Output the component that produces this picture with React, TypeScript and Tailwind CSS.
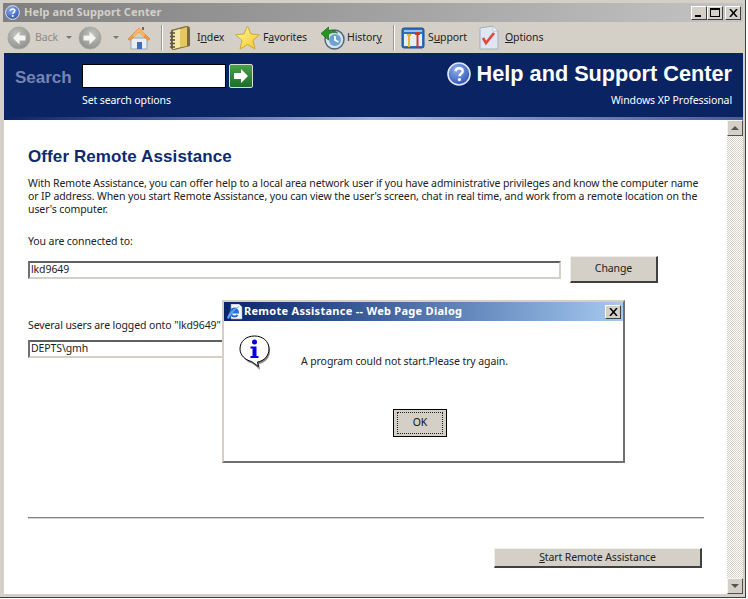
import type { ReactNode } from 'react';

const tahoma = 'font-["Noto_Sans",sans-serif]';
const arial = 'font-["Liberation_Sans",Arial,sans-serif]';
const small = 'text-[10.5px] tracking-[-0.1px]';

function HelpBall({ size, className = '' }: { size: number; className?: string }) {
  return (
    <svg width={size} height={size} viewBox="0 0 24 24" className={className}>
      <defs>
        <radialGradient id="ball" cx="40%" cy="30%" r="75%">
          <stop offset="0" stopColor="#8fb0ee" />
          <stop offset="1" stopColor="#2a52b0" />
        </radialGradient>
      </defs>
      <circle cx="12" cy="12" r="11" fill="url(#ball)" stroke="#dfe6f5" strokeWidth="1.6" />
      <path d="M8.4 9.2c.3-2 1.8-3 3.7-3 2.1 0 3.6 1.2 3.6 3 0 2.6-3.2 2.6-3.2 5" fill="none" stroke="#fff" strokeWidth="2.4" />
      <circle cx="12.4" cy="17.6" r="1.6" fill="#fff" />
    </svg>
  );
}

function NavCircle({ flip }: { flip?: boolean }) {
  return (
    <svg width="24" height="24" viewBox="0 0 24 24" className={flip ? '-scale-x-100' : ''}>
      <defs>
        <radialGradient id="nav" cx="40%" cy="35%" r="70%">
          <stop offset="0" stopColor="#c4c4c0" />
          <stop offset="1" stopColor="#8e8e8a" />
        </radialGradient>
      </defs>
      <circle cx="12" cy="12" r="11" fill="url(#nav)" stroke="#a9a9a4" />
      <path d="M12.5 5.5 6 12l6.5 6.5V14.500h6v-5h-6z" fill="#f4f4f2" />
    </svg>
  );
}

function Caret() {
  return <span className="block h-0 w-0 border-x-[3px] border-t-[3px] border-x-transparent border-t-[#77776f]" />;
}

function Home() {
  return (
    <svg width="24" height="26" viewBox="0 0 24 26">
      <path d="M4 13h16v11H4z" fill="#e8edf6" stroke="#9aa3b5" />
      <path d="M10 17h5v7h-5z" fill="#3d6cc0" />
      <path d="M1 14 12 3l11 11-2 1.500L12 7l-9 8.500z" fill="#f09a3c" stroke="#d87a20" strokeWidth=".6" />
      <path d="M12 3l6 6-1 3-5-5-5 5-2-1z" fill="#f6b766" />
      <path d="M15 2h2v3h-2z" fill="#c2442c" />
    </svg>
  );
}

function Notebook() {
  return (
    <svg width="22" height="26" viewBox="0 0 22 26">
      <path d="M2 5 17 1c3 0 4 1 4 3v17l-16 4c-2 0-3-1-3-3z" fill="#7a6a3e" />
      <path d="M4 6l14-4v19L4 24z" fill="#e6c862" />
      <path d="M4 6l7-2v18l-7 2z" fill="#f6e8a8" />
      <path d="M1 8h5M1 11.500h5M1 15h5M1 18.500h5M1 22h5" stroke="#55534d" strokeWidth="1.400" />
    </svg>
  );
}

function Star() {
  return (
    <svg width="25" height="25" viewBox="0 0 25 25">
      <defs>
        <linearGradient id="star" x1="0" y1="0" x2="1" y2="1">
          <stop offset="0" stopColor="#fff7a8" />
          <stop offset="1" stopColor="#f7c51e" />
        </linearGradient>
      </defs>
      <path d="M12.500 1 16 9l8.500.8-6.500 5.600L20 24l-7.500-4.500L5 24l2-8.600L.5 9.800 9 9z" fill="url(#star)" stroke="#c9a93a" />
    </svg>
  );
}

function History() {
  return (
    <svg width="24" height="24" viewBox="0 0 24 24">
      <circle cx="13.500" cy="13.500" r="9.500" fill="#d5e3ee" stroke="#55657a" strokeWidth="1.500" />
      <circle cx="14" cy="14" r="6" fill="#6ea2d2" />
      <path d="M14 10v4l3.500 2" fill="none" stroke="#fff" strokeWidth="1.800" />
      <path d="M0 7.500 7.500 1v3.500c3.500-1 7 0 9 2.500-3.500-1-6.500-.5-9 1.500V14z" fill="#249424" stroke="#176a17" strokeWidth=".7" />
    </svg>
  );
}

function Support() {
  return (
    <svg width="24" height="24" viewBox="0 0 24 24">
      <rect x="1" y="2" width="22" height="20" rx="2" fill="#2d6fc0" stroke="#234f8e" />
      <path d="M3 8h18v12H3z" fill="#e6eef6" />
      <path d="M3 4h18v2H3z" fill="#9dc1e8" />
      <path d="M6 8h4v2H9v11H7V10H6z" fill="#eeb52a" />
      <path d="M14 6h5v3h-1.500v12h-2V9H14z" fill="#cb3a26" />
    </svg>
  );
}

function Options() {
  return (
    <svg width="20" height="26" viewBox="0 0 20 26">
      <path d="M1 3 14 1l5 5v18H1z" fill="#dfe6f4" stroke="#a6aec0" />
      <path d="M14 1v5h5z" fill="#f5f7fb" stroke="#a6aec0" strokeWidth=".6" />
      <path d="M4 13l3 5 8-10" fill="none" stroke="#de4a3a" strokeWidth="2.600" />
    </svg>
  );
}

function GoArrow() {
  return (
    <svg width="16" height="16" viewBox="0 0 16 16">
      <path d="M8 1l7 7-7 7v-4H1V5h7z" fill="#fff" />
    </svg>
  );
}

function InfoBubble() {
  return (
    <svg width="34" height="36" viewBox="0 0 34 36">
      <path d="M17 3c8 0 14 5 14 13 0 7-5 12-11 13l1 6-7-6C7 27 3 22 3 16 3 8 9 3 17 3z" fill="#8a8a8a" />
      <path d="M15.500 1C23.500 1 30 6 30 14c0 7-5 12-11.500 13l1 4.500L12.500 26.500C6 25 1 20 1 14 1 6 7.500 1 15.500 1z" fill="#fff" stroke="#000" />
      <circle cx="15.500" cy="7" r="2.500" fill="#0000e0" />
      <path d="M11.500 11.500h6v9.500h2v2h-8v-2h2v-7.500h-2z" fill="#0000e0" />
    </svg>
  );
}

function IeDoc() {
  return (
    <svg width="17" height="16" viewBox="0 0 17 16">
      <path d="M5 0h8l3 3v12H5z" fill="#f4f6fb" stroke="#8da0c0" strokeWidth=".6" />
      <path d="M8 3.500a5 5 0 0 1 5 5v1H6a2.500 2.500 0 0 0 4.500 1l2 1A5 5 0 1 1 8 3.500z" fill="#2a6fd8" />
      <path d="M1 14c1-5 7-10 13-12-4 3-9 8-11 13z" fill="#5aa0ee" />
    </svg>
  );
}

function CapButton({ children }: { children: ReactNode }) {
  return (
    <span className="flex h-[14px] w-[16px] items-center justify-center border border-b-[#404040] border-l-white border-r-[#404040] border-t-white bg-[#d4d0c8]">
      {children}
    </span>
  );
}

function CloseGlyph() {
  return (
    <svg width="9" height="8" viewBox="0 0 9 8">
      <path d="M1 0l7 8M8 0 1 8" stroke="#000" strokeWidth="1.500" fill="none" />
    </svg>
  );
}

function ToolLabel({ text, u, className = '' }: { text: string; u: number; className?: string }) {
  return (
    <span className={`${tahoma} ${small} mt-[1px] block text-[#222] ${className}`}>
      {text.slice(0, u)}
      <span className="underline">{text[u]}</span>
      {text.slice(u + 1)}
    </span>
  );
}

function Field({ value, className = '' }: { value: string; className?: string }) {
  return (
    <div className={`${tahoma} ${small} flex h-[18px] items-center border-2 border-b-[#d4d0c8] border-l-[#707070] border-r-[#d4d0c8] border-t-[#606060] pl-[1px] text-[#222] ${className}`}>
      {value}
    </div>
  );
}

function ScrollButton({ up }: { up?: boolean }) {
  return (
    <div className="flex h-[16px] w-[16px] shrink-0 items-center justify-center border border-b-[#505050] border-l-[#f4f4f4] border-r-[#505050] border-t-[#f4f4f4] bg-[#d4d0c8]">
      <span className={`h-0 w-0 border-x-[4px] border-x-transparent ${up ? 'border-b-[4px] border-b-[#555]' : 'border-t-[4px] border-t-[#555]'}`} />
    </div>
  );
}

export default function App() {
  return (
    <div className="relative h-[599px] w-[748px] overflow-hidden bg-white">
      <div className="flex h-[598px] w-[746px] flex-col border-b border-r border-[#404040] bg-[#d4d0c8] pb-[3px] pl-[4px] pr-[2px] pt-[3px]">
        {/* title bar */}
        <div className="-ml-[1px] flex h-[19px] shrink-0 items-center bg-gradient-to-r from-[#7f7f7f] to-[#c4c4c4] pl-[2px] pr-[2px]">
          <HelpBall size={15} />
          <span className={`${tahoma} ml-[4px] text-[11px] font-bold tracking-[0.1px] text-[#d4d0c8]`}>Help and Support Center</span>
          <div className="ml-auto flex">
            <CapButton><span className="mt-[7px] mr-[3px] h-[2px] w-[6px] bg-black" /></CapButton>
            <CapButton><span className="h-[9px] w-[10px] border border-t-2 border-black" /></CapButton>
            <div className="ml-[2px]"><CapButton><CloseGlyph /></CapButton></div>
          </div>
        </div>

        {/* toolbar */}
        <div className="-ml-[1px] flex h-[31px] shrink-0 items-center bg-[#d4d0c8] pl-[4px]">
          <NavCircle />
          <span className={`${tahoma} ${small} ml-[4px] mt-[1px] block w-[23px] text-[#8a8a85]`}>Back</span>
          <span className="ml-[8px] block w-[6px]"><Caret /></span>
          <span className="ml-[6px] block"><NavCircle flip /></span>
          <span className="ml-[11px] block w-[6px]"><Caret /></span>
          <span className="ml-[8px] block"><Home /></span>
          <span className="ml-[10px] block h-[26px] w-[2px] border-l border-r border-l-[#9a978f] border-r-white" />
          <span className="ml-[6px] block"><Notebook /></span>
          <ToolLabel text="Index" u={1} className="ml-[6px] w-[29px]" />
          <span className="ml-[9px] block"><Star /></span>
          <ToolLabel text="Favorites" u={1} className="ml-[3px] w-[47px]" />
          <span className="ml-[11px] block"><History /></span>
          <ToolLabel text="History" u={6} className="ml-[2px] w-[36px]" />
          <span className="ml-[10px] block h-[26px] w-[2px] border-l border-r border-l-[#9a978f] border-r-white" />
          <span className="ml-[6px] block"><Support /></span>
          <ToolLabel text="Support" u={1} className="ml-[3px] w-[40px]" />
          <span className="ml-[11px] block"><Options /></span>
          <ToolLabel text="Options" u={0} className="ml-[6px]" />
        </div>

        {/* search banner */}
        <div className="flex h-[64px] shrink-0 bg-[#0a2463] pl-[11px] pr-[11px]">
          <span className={`${arial} mt-[14px] w-[56px] text-[17px] font-bold leading-[22px] text-[#7484b4]`}>Search</span>
          <div className="ml-[11px] mt-[11px]">
            <div className="flex items-center">
              <div className="h-[24px] w-[144px] border border-black bg-white" />
              <div className="ml-[3px] flex h-[24px] w-[24px] items-center justify-center rounded-[2px] border border-[#cfe3d0] bg-gradient-to-b from-[#4aa04a] to-[#1a6e28]">
                <GoArrow />
              </div>
            </div>
            <p className={`${tahoma} ${small} mt-[5px] leading-[14px] text-white`}>Set search options</p>
          </div>
          <div className="ml-auto mt-[6px] flex flex-col items-end">
            <div className="flex items-center">
              <HelpBall size={24} />
              <span className={`${arial} ml-[6px] text-[21.7px] font-bold leading-[30px] text-white`}>Help and Support Center</span>
            </div>
            <p className={`${tahoma} ${small} mt-[4px] leading-[14px] text-white`}>Windows XP Professional</p>
          </div>
        </div>
        <div className="h-[3px] shrink-0 bg-gradient-to-r from-[#0a2463] via-[#9fb0dc] to-[#4a5f98]" />

        {/* content + scrollbar */}
        <div className="flex min-h-0 flex-1">
          <main className="min-w-0 flex-1 bg-white pl-[24px]">
            <h1 className={`${arial} mt-[26px] text-[17px] font-bold leading-[22px] tracking-[0.1px] text-[#0f2a6e]`}>Offer Remote Assistance</h1>
            <p className={`${tahoma} ${small} mt-[9px] w-[680px] leading-[13px] text-[#222]`}>
              With Remote Assistance, you can offer help to a local area network user if you have administrative privileges and know the computer name or IP address. When you start Remote Assistance, you can view the user's screen, chat in real time, and work from a remote location on the user's computer.
            </p>
            <p className={`${tahoma} ${small} mt-[19px] leading-[13px] text-[#222]`}>You are connected to:</p>
            <div className="mt-[8px] flex items-center">
              <Field value="lkd9649" className="w-[533px]" />
              <button className={`${tahoma} ${small} ml-[9px] h-[27px] w-[88px] border border-b-2 border-r-2 border-b-[#404040] border-l-[#f0eee8] border-r-[#404040] border-t-[#f0eee8] bg-[#d4d0c8] text-[#222]`}>
                Chan<span className="underline">g</span>e
              </button>
            </div>
            <p className={`${tahoma} ${small} mt-[36px] leading-[13px] text-[#222]`}>Several users are logged onto "lkd9649"</p>
            <Field value="DEPTS\gmh" className="mt-[8px] w-[533px]" />
            <div className="mt-[159px] h-[2px] w-[676px] border-b border-t border-b-[#d8d8d8] border-t-[#808080]" />
            <div className="mt-[29px] flex w-[674px] justify-end">
              <button className={`${tahoma} ${small} h-[20px] w-[208px] border border-b-2 border-r-2 border-b-[#404040] border-l-[#f0eee8] border-r-[#404040] border-t-[#f0eee8] bg-[#d4d0c8] text-[#222]`}>
                <span className="underline">S</span>tart Remote Assistance
              </button>
            </div>
          </main>
          <aside className="flex w-[16px] shrink-0 flex-col">
            <ScrollButton up />
            <div className="flex-1 bg-[repeating-conic-gradient(#d4d0c8_0_25%,#ffffff_0_50%)] bg-[length:2px_2px]" />
            <ScrollButton />
          </aside>
        </div>
      </div>

      {/* dialog floats over the page */}
      <div className="absolute left-[222px] top-[300px] h-[163px] w-[403px] border-2 border-b-[#707070] border-l-[#d4d0c8] border-r-[#707070] border-t-[#d4d0c8] bg-white">
        <div className="flex h-[19px] items-center bg-gradient-to-r from-[#0a246a] to-[#a6caf0] pl-[2px] pr-[2px]">
          <IeDoc />
          <span className={`${tahoma} ml-[1px] text-[11px] font-bold tracking-[0.28px] text-white`}>Remote Assistance -- Web Page Dialog</span>
          <span className="ml-auto block"><CapButton><CloseGlyph /></CapButton></span>
        </div>
        <div className="ml-[15px] mt-[14px] flex items-start">
          <InfoBubble />
          <p className={`${tahoma} ${small} ml-[28px] mt-[20px] leading-[13px] text-[#222]`}>A program could not start.Please try again.</p>
        </div>
        <div className="ml-[169px] mt-[38px] flex">
          <button className={`${tahoma} ${small} flex h-[28px] w-[54px] items-center justify-center border border-black bg-[#d4d0c8] text-[#111]`}>
            <span className="flex h-[22px] w-[46px] items-center justify-center border border-dotted border-[#222]">OK</span>
          </button>
        </div>
      </div>
    </div>
  );
}
